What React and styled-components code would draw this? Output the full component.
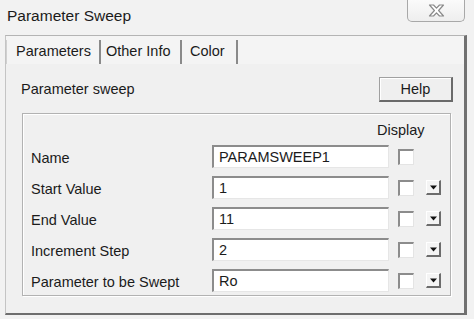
import React from 'react';
import styled, { createGlobalStyle } from 'styled-components';

const GlobalStyle = createGlobalStyle`
  body {
    margin: 0;
    background: #f0f0f0;
    font-family: "Liberation Sans", Arial, sans-serif;
    color: #1b1b1b;
  }
`;

const Window = styled.div`
  width: 474px;
  height: 319px;
  background: #f2f2f2;
  overflow: hidden;
  display: flex;
  flex-direction: column;
`;

const TitleBar = styled.div`
  height: 35px;
  display: flex;
  align-items: flex-start;
  justify-content: space-between;
`;

const Title = styled.div`
  font-size: 15.5px;
  line-height: 16px;
  padding: 8px 0 0 7px;
`;

const CloseButton = styled.div`
  width: 56px;
  height: 22px;
  margin-right: 9px;
  margin-top: -1px;
  border: 1px solid #a8a8a8;
  border-top: none;
  border-radius: 0 0 5px 5px;
  background: linear-gradient(#fbfbfb, #eeeeee);
  display: flex;
  align-items: center;
  justify-content: center;
`;

const Panel = styled.div`
  margin-left: 5px;
  width: 458px;
  height: 277px;
  border-top: 1px solid #b4b4b4;
  border-left: 1px solid #c4c4c4;
  border-right: 3px solid #707070;
  border-bottom: 2px solid #6e6e6e;
  background: #f0f0f0;
  display: flex;
  flex-direction: column;
`;

const TabRow = styled.div`
  height: 28px;
  display: flex;
  align-items: flex-end;
  background: #f4f4f4;
`;

const Tab = styled.div`
  width: ${p => p.$width}px;
  height: 24px;
  padding-left: ${p => p.$left}px;
  font-size: 14.5px;
  line-height: 22px;
  border-right: 2px solid #8a8a8a;
  border-left: ${p => (p.$active ? '1px solid #d0d0d0' : 'none')};
  box-sizing: border-box;
  color: #1b1b1b;
`;

const Content = styled.div`
  padding: 12px 11px 0 15px;
  display: flex;
  flex-direction: column;
`;

const SweepRow = styled.div`
  display: flex;
  align-items: center;
  justify-content: space-between;
  height: 26px;
`;

const SweepLabel = styled.div`
  font-size: 14.5px;
`;

const Button = styled.div`
  width: 74px;
  height: 25px;
  box-sizing: border-box;
  border: 1px solid #a0a0a0;
  border-right: 2px solid #6a6a6a;
  border-bottom: 2px solid #6a6a6a;
  box-shadow: inset 1px 1px 0 #ffffff;
  background: #efefef;
  font-size: 14.5px;
  display: flex;
  align-items: center;
  justify-content: center;
`;

const GroupBox = styled.div`
  margin: 11px 0 0 1px;
  width: 429px;
  height: 183px;
  box-sizing: border-box;
  border: 1px solid #b2b2b2;
  box-shadow: inset 1px 1px 0 #ffffff, 1px 1px 0 #ffffff;
  padding: 8px 0 0 8px;
  display: flex;
  flex-direction: column;
  gap: 8px;
`;

const DisplayHeader = styled.div`
  height: 16px;
  font-size: 14.5px;
  line-height: 16px;
  padding-left: 346px;
  margin-bottom: -1px;
`;

const Row = styled.div`
  display: flex;
  align-items: center;
  height: 23px;
`;

const FieldLabel = styled.div`
  width: 181px;
  font-size: 14.5px;
  padding-top: 2px;
`;

const TextInput = styled.div`
  width: 177px;
  height: 23px;
  box-sizing: border-box;
  background: #ffffff;
  border-top: 2px solid #8c8c8c;
  border-left: 2px solid #8c8c8c;
  border-right: 1px solid #e6e6e6;
  border-bottom: 1px solid #e6e6e6;
  font-size: 14.5px;
  line-height: 20px;
  padding-left: 5px;
`;

const Checkbox = styled.div`
  width: 16px;
  height: 16px;
  margin-left: 9px;
  box-sizing: border-box;
  background: #ffffff;
  border-top: 2px solid #8c8c8c;
  border-left: 2px solid #8c8c8c;
  border-right: 1px solid #e4e4e4;
  border-bottom: 1px solid #e4e4e4;
`;

const DropButton = styled.div`
  width: 15px;
  height: 15px;
  margin-left: 12px;
  box-sizing: border-box;
  background: #f4f4f4;
  border-top: 1px solid #ffffff;
  border-left: 1px solid #ffffff;
  border-right: 2px solid #6c6c6c;
  border-bottom: 2px solid #6c6c6c;
  display: flex;
  align-items: center;
  justify-content: center;
`;

const Arrow = () => (
  <svg width="7" height="5" viewBox="0 0 7 5">
    <path d="M0 0.5 H7 L3.5 4.5 Z" fill="#111" />
  </svg>
);

const CloseIcon = () => (
  <svg width="17" height="13" viewBox="0 0 17 13">
    <path
      d="M1.5 1 H5.5 L8.5 4.2 L11.5 1 H15.5 L10.6 6.5 L15.5 12 H11.5 L8.5 8.8 L5.5 12 H1.5 L6.4 6.5 Z"
      fill="#ffffff"
      stroke="#8a8a8a"
      strokeWidth="1.2"
      strokeLinejoin="round"
    />
  </svg>
);

const rows = [
  { label: 'Name', value: 'PARAMSWEEP1', drop: false },
  { label: 'Start Value', value: '1', drop: true },
  { label: 'End Value', value: '11', drop: true },
  { label: 'Increment Step', value: '2', drop: true },
  { label: 'Parameter to be Swept', value: 'Ro', drop: true },
];

export default function App() {
  return (
    <>
      <GlobalStyle />
      <Window>
        <TitleBar>
          <Title>Parameter Sweep</Title>
          <CloseButton>
            <CloseIcon />
          </CloseButton>
        </TitleBar>
        <Panel>
          <TabRow>
            <Tab $active $width={95} $left={9}>Parameters</Tab>
            <Tab $width={81} $left={5}>Other Info</Tab>
            <Tab $width={56} $left={8}>Color</Tab>
          </TabRow>
          <Content>
            <SweepRow>
              <SweepLabel>Parameter sweep</SweepLabel>
              <Button>Help</Button>
            </SweepRow>
            <GroupBox>
              <DisplayHeader>Display</DisplayHeader>
              {rows.map(r => (
                <Row key={r.label}>
                  <FieldLabel>{r.label}</FieldLabel>
                  <TextInput>{r.value}</TextInput>
                  <Checkbox />
                  {r.drop && (
                    <DropButton>
                      <Arrow />
                    </DropButton>
                  )}
                </Row>
              ))}
            </GroupBox>
          </Content>
        </Panel>
      </Window>
    </>
  );
}
